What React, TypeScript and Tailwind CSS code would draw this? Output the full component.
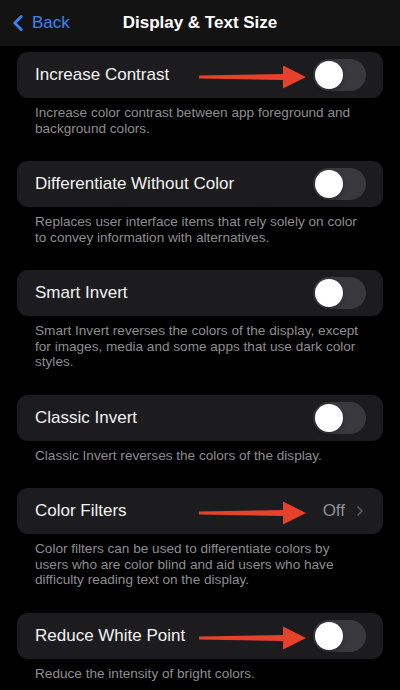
import { ChevronLeft, ChevronRight } from "lucide-react";

type Row = {
  label: string;
  desc: string;
  kind: "toggle" | "link";
  arrow?: boolean;
};

const rows: Row[] = [
  {
    label: "Increase Contrast",
    desc: "Increase color contrast between app foreground and background colors.",
    kind: "toggle",
    arrow: true,
  },
  {
    label: "Differentiate Without Color",
    desc: "Replaces user interface items that rely solely on color to convey information with alternatives.",
    kind: "toggle",
  },
  {
    label: "Smart Invert",
    desc: "Smart Invert reverses the colors of the display, except for images, media and some apps that use dark color styles.",
    kind: "toggle",
  },
  {
    label: "Classic Invert",
    desc: "Classic Invert reverses the colors of the display.",
    kind: "toggle",
  },
  {
    label: "Color Filters",
    desc: "Color filters can be used to differentiate colors by users who are color blind and aid users who have difficulty reading text on the display.",
    kind: "link",
    arrow: true,
  },
  {
    label: "Reduce White Point",
    desc: "Reduce the intensity of bright colors.",
    kind: "toggle",
    arrow: true,
  },
];

function Toggle() {
  return (
    <div className="w-[53px] h-[32px] rounded-full bg-[#39393d] p-[2px] flex items-center">
      <div className="w-[28px] h-[28px] rounded-full bg-white shadow-[0_2px_4px_rgba(0,0,0,0.3)]" />
    </div>
  );
}

// red annotation arrow laid over the screenshot
function Arrow() {
  return (
    <svg width="108" height="24" viewBox="0 0 108 24" className="absolute left-[182px] top-[13px]">
      <polygon points="0,10.5 84,9 84,0.5 107,12 84,23.5 84,15 0,13.5" fill="#e5412b" />
    </svg>
  );
}

export default function App() {
  return (
    <div
      className="w-[400px] h-[690px] overflow-hidden bg-black text-white"
      style={{ fontFamily: '"Liberation Sans", Arial, sans-serif' }}
    >
      {/* Nav bar */}
      <div className="h-[46px] bg-[#131313] relative flex items-center">
        <div className="flex items-center pl-[5px] text-[#3a84f5]">
          <ChevronLeft size={26} strokeWidth={2.6} />
          <span className="text-[17px] ml-[1px]">Back</span>
        </div>
        <div className="absolute inset-0 flex items-center justify-center pointer-events-none">
          <span className="text-[17px] font-bold">Display &amp; Text Size</span>
        </div>
      </div>

      <div className="px-[17px] pt-[6px]">
        {rows.map((r, i) => (
          <div key={i} className="pb-[25px]">
            <div className="relative h-[46px] rounded-[11px] bg-[#1c1c1e] flex items-center justify-between pl-[18px] pr-[15px]">
              <span className="text-[17px] text-[#f2f2f2]">{r.label}</span>
              {r.kind === "toggle" ? (
                <div className="pr-[2px]">
                  <Toggle />
                </div>
              ) : (
                <div className="flex items-center gap-[7px]">
                  <span className="text-[17px] text-[#8e8e93]">Off</span>
                  <ChevronRight size={16} strokeWidth={2.4} className="text-[#5c5c60]" />
                </div>
              )}
              {r.arrow && <Arrow />}
            </div>
            <p className="pt-[7px] pl-[18px] pr-[23px] text-[13.6px] leading-[15.5px] text-[#8d8d92]">
              {r.desc}
            </p>
          </div>
        ))}
      </div>
    </div>
  );
}
